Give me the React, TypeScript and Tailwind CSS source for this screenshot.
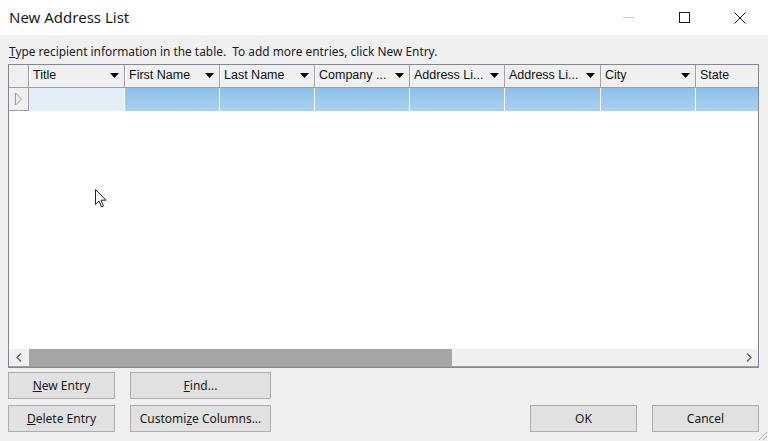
import React from "react";

const cols: { label: string; w: number }[] = [
  { label: "Title", w: 96 },
  { label: "First Name", w: 95 },
  { label: "Last Name", w: 95 },
  { label: "Company ...", w: 95 },
  { label: "Address Li...", w: 95 },
  { label: "Address Li...", w: 96 },
  { label: "City", w: 95 },
];

function Caret() {
  return (
    <svg width="9" height="5" viewBox="0 0 9 5" className="shrink-0">
      <path d="M0 0 H9 L4.5 5 Z" fill="#000" />
    </svg>
  );
}

function Btn({ children, w }: { children: React.ReactNode; w: string }) {
  return (
    <div
      className={`${w} h-[27px] bg-[#e1e1e1] border border-[#adadad] flex items-center justify-center text-[12px] text-[#1a1a1a]`}
    >
      {children}
    </div>
  );
}

export default function App() {
  return (
    <div
      className="relative w-[768px] h-[441px] bg-[#f0f0f0] flex flex-col overflow-hidden"
      style={{ fontFamily: '"Noto Sans", "Open Sans", sans-serif' }}
    >
      {/* Title bar */}
      <div className="h-[35px] bg-white flex items-center shrink-0">
        <div className="pl-[9px] text-[15px] text-[#1a1a1a] flex-1">New Address List</div>
        <div className="flex items-center h-full">
          <div className="w-[56px] h-full flex items-center justify-center">
            <div className="w-[11px] h-px bg-[#c8c8c8]" />
          </div>
          <div className="w-[56px] h-full flex items-center justify-center">
            <div className="w-[11px] h-[11px] border border-[#1a1a1a]" />
          </div>
          <div className="w-[56px] h-full flex items-center justify-center">
            <svg width="12" height="12" viewBox="0 0 12 12">
              <path d="M0.5 0.5 L11.5 11.5 M11.5 0.5 L0.5 11.5" stroke="#1a1a1a" strokeWidth="1" />
            </svg>
          </div>
        </div>
      </div>

      {/* Instruction */}
      <div className="h-[29px] shrink-0 flex items-end pb-[3px] pl-[9px] text-[11.9px] text-[#1a1a1a]">
        <span>
          <span className="underline">T</span>ype recipient information in the table.&nbsp; To add more entries, click New Entry.
        </span>
      </div>

      {/* Table */}
      <div className="ml-[8px] w-[751px] h-[304px] border border-[#828790] bg-white flex flex-col shrink-0">
        {/* header row */}
        <div className="h-[23px] flex shrink-0 bg-[#f0f0f0] border-b border-[#a0a0a0]" style={{ fontFamily: '"Liberation Sans", Arial, sans-serif' }}>
          <div className="w-[20px] h-full border-r border-[#a0a0a0] shrink-0" />
          {cols.map((c, i) => (
            <div
              key={i}
              className="h-full flex items-center border-l border-white border-r border-r-[#a0a0a0] pl-[3px] pr-[5px] pb-px shrink-0 text-[12.5px] text-[#111]"
              style={{ width: c.w }}
            >
              <span className="flex-1 whitespace-nowrap overflow-hidden">{c.label}</span>
              <Caret />
            </div>
          ))}
          <div className="h-full flex-1 flex items-center border-l border-white pl-[3px] pb-px text-[12.5px] text-[#111]">
            State
          </div>
        </div>
        {/* data row */}
        <div className="h-[23px] flex shrink-0">
          <div className="w-[20px] h-full bg-[#f0f0f0] border-r border-b border-[#a0a0a0] shrink-0 flex items-center justify-center">
            <svg width="9" height="14" viewBox="0 0 9 14">
              <path d="M1.5 1 L7.5 7 L1.5 13 Z" fill="none" stroke="#8a9bb0" strokeWidth="1" />
            </svg>
          </div>
          {cols.map((c, i) => (
            <div
              key={i}
              className={`h-full shrink-0 border-r border-white ${
                i === 0 ? "bg-[#e3eef9]" : "bg-gradient-to-b from-[#8bbfea] to-[#acd2f2]"
              }`}
              style={{ width: c.w }}
            />
          ))}
          <div className="h-full flex-1 bg-gradient-to-b from-[#8bbfea] to-[#acd2f2]" />
        </div>
        <div className="flex-1" />
        {/* horizontal scrollbar */}
        <div className="h-[18px] flex shrink-0 bg-[#f0f0f0] border-b border-[#a0a0a0]">
          <div className="w-[20px] h-full flex items-center justify-center">
            <svg width="6" height="9" viewBox="0 0 6 9">
              <path d="M5 0.5 L1 4.5 L5 8.5" fill="none" stroke="#606060" strokeWidth="1.3" />
            </svg>
          </div>
          <div className="w-[423px] h-full bg-[#a6a6a6]" />
          <div className="flex-1" />
          <div className="w-[18px] h-full flex items-center justify-center">
            <svg width="6" height="9" viewBox="0 0 6 9">
              <path d="M1 0.5 L5 4.5 L1 8.5" fill="none" stroke="#606060" strokeWidth="1.3" />
            </svg>
          </div>
        </div>
      </div>

      {/* Buttons */}
      <div className="mt-[4px] pl-[8px] pr-[9px] flex justify-between items-end">
        <div className="flex flex-col gap-[6px]">
          <div className="flex gap-[15px]">
            <Btn w="w-[107px]">
              <span><span className="underline">N</span>ew Entry</span>
            </Btn>
            <Btn w="w-[141px]">
              <span><span className="underline">F</span>ind...</span>
            </Btn>
          </div>
          <div className="flex gap-[15px]">
            <Btn w="w-[107px]">
              <span><span className="underline">D</span>elete Entry</span>
            </Btn>
            <Btn w="w-[141px]">
              <span>Customi<span className="underline">z</span>e Columns...</span>
            </Btn>
          </div>
        </div>
        <div className="flex gap-[15px]">
          <Btn w="w-[107px]">OK</Btn>
          <Btn w="w-[107px]">Cancel</Btn>
        </div>
      </div>

      {/* mouse cursor */}
      <svg className="absolute left-[95px] top-[189px]" width="13" height="20" viewBox="0 0 13 20">
        <path d="M0.5 0.5 L0.5 15.5 L4 12 L6.5 18 L8.5 17 L6 11.2 L11 11.2 Z" fill="#fff" stroke="#222" strokeWidth="1" strokeLinejoin="round" />
      </svg>

      {/* resize grip */}
      <svg className="absolute right-0 bottom-0" width="12" height="12" viewBox="0 0 12 12">
        <path d="M11 3 L3 11 M11 7 L7 11" stroke="#b0b0b0" strokeWidth="1" />
      </svg>
    </div>
  );
}
